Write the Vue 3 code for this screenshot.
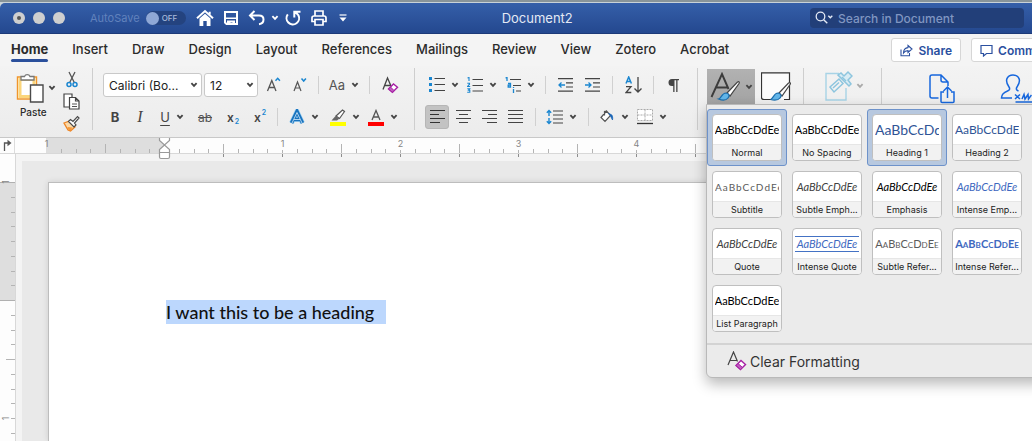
<script setup>
import { h } from 'vue'

const Chevron = () =>
  h('svg', { class: 'chev', width: 8, height: 6, viewBox: '0 0 8 6', 'aria-hidden': 'true' }, [
    h('path', { d: 'M1.4 1.2 4 3.9 6.6 1.2', fill: 'none', stroke: 'currentColor', 'stroke-width': 1.8 }),
  ])

const tabs = ['Home', 'Insert', 'Draw', 'Design', 'Layout', 'References', 'Mailings', 'Review', 'View', 'Zotero', 'Acrobat']

const styles = [
  { name: 'Normal', look: 'plain', selected: true },
  { name: 'No Spacing', look: 'plain' },
  { name: 'Heading 1', look: 'h1', selected: true },
  { name: 'Heading 2', look: 'h2' },
  { name: 'Subtitle', look: 'subtitle' },
  { name: 'Subtle Emph...', look: 'italic soft' },
  { name: 'Emphasis', look: 'italic' },
  { name: 'Intense Emp...', look: 'italic blue' },
  { name: 'Quote', look: 'italic soft' },
  { name: 'Intense Quote', look: 'italic blue ruled' },
  { name: 'Subtle Refer...', look: 'caps grey' },
  { name: 'Intense Refer...', look: 'caps blue bold' },
  { name: 'List Paragraph', look: 'plain' },
]

const inch = 118
const originX = 164
const originY = 300
const eighths = (from, to) => Array.from({ length: to - from + 1 }, (_, i) => from + i)
const mark = (origin, n) => Math.round(origin + (n * inch) / 8) + 0.5
const hTicks = eighths(-8, 96)
const vTicks = eighths(-7, 64)
const isInch = (n) => n % 8 === 0
const isHalf = (n) => n % 4 === 0 && !isInch(n)
</script>

<template>
  <div class="window">
    <header class="titlebar">
      <div class="lights"><i class="edited"></i><i></i><i></i></div>
      <label class="autosave">AutoSave
        <input type="checkbox" disabled>
        <span class="switch"><b></b>OFF</span>
      </label>
      <nav class="quick">
        <button aria-label="Home">
          <svg width="18" height="18" viewBox="0 0 18 18"><path d="M1 9.200 9 2l8 7.200M13.700 5.500V2.800" fill="none" stroke="#fff" stroke-width="2"/><path d="M3.500 9.600 9 4.800l5.500 4.800V17h-3.800v-5H7.300v5H3.500z" fill="#fff"/></svg>
        </button>
        <button aria-label="Save">
          <svg width="16" height="16" viewBox="0 0 16 16"><path d="M2 2h12v12H3.500L2 12.500z" fill="none" stroke="#fff" stroke-width="2"/><path d="M2 7.500h12v1.500H2zM4 10.500h8V15H9.500v-2.500h-2V15H4z" fill="#fff"/></svg>
        </button>
        <button aria-label="Undo">
          <svg width="18" height="16" viewBox="0 0 18 16"><path d="M6.500 1 2 5.500 6.500 10M2.500 5.500h8.500c3 0 4.500 1.600 4.500 4 0 2.500-1.600 4.300-4.500 4.700" fill="none" stroke="#fff" stroke-width="2"/></svg>
        </button>
        <button class="narrow" aria-label="Undo history"><Chevron /></button>
        <button aria-label="Repeat">
          <svg width="16" height="16" viewBox="0 0 16 16"><path d="M2.800 4.300A6.300 6.300 0 1 0 13.400 5.200Q12 3.200 9.500 2.300M15.500 1.700H9.300V7.500" fill="none" stroke="#fff" stroke-width="2"/></svg>
        </button>
        <button aria-label="Print">
          <svg width="18" height="18" viewBox="0 0 18 18"><path d="M5 7V2h8v5M5 12.500H2V9q0-2 2-2h10q2 0 2 2v3.500h-3M5 10.500h8V16H5z" fill="none" stroke="#fff" stroke-width="1.700"/></svg>
        </button>
        <button class="narrow" aria-label="Customize toolbar">
          <svg width="8" height="8" viewBox="0 0 8 8"><path d="M.5 1h7" stroke="#fff" stroke-width="1.200"/><path d="M.5 3.500h7L4 7.500z" fill="#fff"/></svg>
        </button>
      </nav>
      <h1>Document2</h1>
      <label class="search">
        <svg width="19" height="14" viewBox="0 0 19 14"><circle cx="5.500" cy="5.500" r="4.300" fill="none" stroke="#e4eaf5" stroke-width="1.300"/><path d="m8.700 8.700 3.600 3.600M13.300 4.800l2 2 2-2" fill="none" stroke="#e4eaf5" stroke-width="1.400"/></svg>
        <input type="text" placeholder="Search in Document" aria-label="Search in Document">
      </label>
    </header>

    <nav class="tabs">
      <button v-for="(t, i) in tabs" :key="t" class="tab" :class="{ active: i === 0 }">{{ t }}</button>
      <div class="actions">
        <button class="pill">
          <svg width="13" height="13" viewBox="0 0 13 13"><path d="M1 5.500v6.300h8.500V9M8 1.500l4 3.500-4 3.500V6.600C5.800 6.600 4.500 7.400 3.500 9 3.600 5.800 5.500 3.800 8 3.600z" fill="none" stroke="#2b50a0" stroke-width="1.100"/></svg>
          Share
        </button>
        <button class="pill">
          <svg width="13" height="13" viewBox="0 0 13 13"><path d="M1 1.500h11v8H6.500L3.500 12V9.500H1z" fill="none" stroke="#2b50a0" stroke-width="1.200"/></svg>
          Comments
        </button>
      </div>
    </nav>

    <section class="ribbon">
      <div class="group clipboard">
        <button class="paste">
          <span class="paste-row">
            <svg width="28" height="31" viewBox="0 0 28 31"><path d="M1.500 5h19v22h-19z" fill="#fff" stroke="#f0952b" stroke-width="1.400"/><path d="M4 7.500h14v17H4z" fill="#fff" stroke="#fbd67c" stroke-width="3"/><path d="M5 8V4.500h3.500a3 3 0 0 1 5.500 0h4V8z" fill="#fff" stroke="#777" stroke-width="1.300"/><path d="M14.500 13h12.500v17H14.500z" fill="#fff" stroke="#4a4a4a" stroke-width="1.400"/></svg>
            <Chevron />
          </span>
          Paste
        </button>
        <div class="stack">
          <button aria-label="Cut">
            <svg width="12" height="17" viewBox="0 0 12 17"><path d="m3 1 5.300 10.500M9 1 3.700 11.500" stroke="#555" stroke-width="1.300" fill="none"/><circle cx="3" cy="13.500" r="2" fill="none" stroke="#1a86d0" stroke-width="1.500"/><circle cx="9" cy="13.500" r="2" fill="none" stroke="#1a86d0" stroke-width="1.500"/></svg>
          </button>
          <button aria-label="Copy">
            <svg width="17" height="17" viewBox="0 0 17 17"><path d="M6 14H1V1h8v3" fill="#fff" stroke="#444" stroke-width="1.200"/><path d="M6.500 4.500h6L16 8v8H6.500zM12.500 4.500V8H16" fill="#fff" stroke="#444" stroke-width="1.200"/><path d="M9 11h5M9 13.500h5" stroke="#555"/></svg>
          </button>
          <button aria-label="Format painter">
            <svg width="17" height="17" viewBox="0 0 17 17"><path d="m1 8 5.500-2L12 12l-4.500 4-2.500-1z" fill="#fbd9a8" stroke="#ee8322" stroke-width="1.300"/><path d="m4.500 12 5 .5-2 3-2.500-1z" fill="#f59a3a"/><path d="m5.500 6.500 2-2L10 6.500l4.500-5 1.500 1.500-4.500 5 1.500 2-2 2z" fill="#fff" stroke="#4a4a4a" stroke-width="1.200"/></svg>
          </button>
        </div>
      </div>

      <div class="group font">
        <div class="row font-top">
          <span class="field"><select aria-label="Font"><option>Calibri (Bo...</option></select><Chevron /></span>
          <span class="field"><select aria-label="Font size"><option>12</option></select><Chevron /></span>
          <button class="glyph" aria-label="Increase font size">
            <svg width="16" height="16" viewBox="0 0 16 16"><path d="M1.500 14 5.800 3.500 10 14M3 10.500h5.600" fill="none" stroke="#555" stroke-width="1.300"/><path d="m9.500 3.800 2.200-2.500 2.200 2.500" fill="none" stroke="#1a86d0" stroke-width="1.500"/></svg>
          </button>
          <button class="glyph" aria-label="Decrease font size">
            <svg width="16" height="16" viewBox="0 0 16 16"><path d="M2 14 5.500 5 9 14M3.200 11h4.600" fill="none" stroke="#555" stroke-width="1.200"/><path d="m9.500 1.500 2.200 2.500 2.200-2.500" fill="none" stroke="#1a86d0" stroke-width="1.500"/></svg>
          </button>
          <i class="sep"></i>
          <button class="case">Aa<Chevron /></button>
          <i class="sep"></i>
          <button aria-label="Clear formatting">
            <svg width="18" height="18" viewBox="0 0 18 18"><path d="M2 13.500 6.500 2 10 10M3.600 9.500h6" fill="none" stroke="#444" stroke-width="1.300"/><path d="m7.500 13 5-5 4 3.300-5 5z" fill="#fff" stroke="#a71fa5" stroke-width="1.400"/><path d="m7.500 13 2-2 3.500 3.500-1.700 1.800z" fill="#c05dbf" stroke="#a71fa5"/></svg>
          </button>
        </div>
        <div class="row font-bottom">
          <button class="b">B</button>
          <button class="i">I</button>
          <button class="u"><span>U</span><Chevron /></button>
          <button class="s">ab</button>
          <button class="x">x<sub>2</sub></button>
          <button class="x">x<sup>2</sup></button>
          <i class="sep"></i>
          <button aria-label="Text effects">
            <svg width="16" height="16" viewBox="0 0 16 16" fill="none"><path d="M2.500 14 8 2.500 13.500 14M4.500 10.500h7" stroke="#a5d3f2" stroke-width="5"/><path d="M2.500 14 8 2.500 13.500 14M4.500 10.500h7" stroke="#1973be" stroke-width="3.600"/><path d="M3 14 8 3.500 13 14M5 10.500h6" stroke="#d5ebfa" stroke-width=".8"/></svg>
            <Chevron />
          </button>
          <button aria-label="Highlight">
            <svg width="16" height="17" viewBox="0 0 16 17"><path d="M6 7 12.500 1l2 1.500-5 7z" fill="#fff" stroke="#555" stroke-width="1.200"/><path d="m1.500 11.500 4-4.500 4 2.500-2.500 2z" fill="#666"/><path d="M0 13h16v4H0z" fill="#ff0"/></svg>
            <Chevron />
          </button>
          <button aria-label="Font color">
            <svg width="16" height="17" viewBox="0 0 16 17"><path d="M4 11 8 1.500 12 11M5.300 8h5.400" fill="none" stroke="#555" stroke-width="1.300"/><path d="M0 13h16v4H0z" fill="red"/></svg>
            <Chevron />
          </button>
        </div>
      </div>

      <div class="group para">
        <div class="row para-top">
          <button aria-label="Bullets">
            <svg width="16" height="16" viewBox="0 0 16 16"><path d="M0 0h3v3H0zM0 6h3v3H0zM0 12h3v3H0z" fill="#1a86d0"/><path d="M5.500 1.500H16M5.500 7.500H16M5.500 13.500H16" stroke="#444" stroke-width="1.200"/></svg>
            <Chevron />
          </button>
          <button aria-label="Numbering">
            <svg width="16" height="16" viewBox="0 0 16 16"><path d="M.5 1 2 .5V4M.3 6.200h2.200v1L.5 9.500h2.700M.3 11.700h2.400l-1.200 1.600h1.300v1.900H.2" fill="none" stroke="#1a86d0" stroke-width="1.100"/><path d="M5.500 2.500H16M5.500 8.500H16M5.500 14H16" stroke="#444" stroke-width="1.200"/></svg>
            <Chevron />
          </button>
          <button aria-label="Multilevel list">
            <svg width="16" height="17" viewBox="0 0 16 17"><path d="M.5 1 2 .5V4M3 6.500h2.500V10H3.200V8.200h2.300M8.500 12v4M8.500 10v1" fill="none" stroke="#1a86d0" stroke-width="1.300"/><path d="M5 2.500h11M8 8.500h8M11 14h5" stroke="#444" stroke-width="1.200"/></svg>
            <Chevron />
          </button>
          <i class="sep"></i>
          <button class="glyph" aria-label="Decrease indent">
            <svg width="15" height="14" viewBox="0 0 15 14"><path d="M0 .6h15M8 4.800h7M8 9h7M0 13.200h15" stroke="#444" stroke-width="1.200"/><path d="M7 7H1m2.500-2.500L1 7l2.500 2.500" stroke="#1a86d0" stroke-width="1.300" fill="none"/></svg>
          </button>
          <button class="glyph" aria-label="Increase indent">
            <svg width="15" height="14" viewBox="0 0 15 14"><path d="M0 .6h15M8 4.800h7M8 9h7M0 13.200h15" stroke="#444" stroke-width="1.200"/><path d="M0 7h6M3.500 4.500 6 7 3.500 9.500" stroke="#1a86d0" stroke-width="1.300" fill="none"/></svg>
          </button>
          <i class="sep"></i>
          <button class="glyph" aria-label="Sort">
            <svg width="17" height="18" viewBox="0 0 17 18"><path d="M1 7.500 3.700 1l2.700 6.500M2 5.500h3.500" fill="none" stroke="#1a86d0" stroke-width="1.500"/><path d="M1 10.700h5L1 16.500h5.300M13 1v15m-3.500-3.500L13 16l3.500-3.500" fill="none" stroke="#444" stroke-width="1.300"/></svg>
          </button>
          <i class="sep"></i>
          <button class="glyph" aria-label="Show formatting marks">
            <svg width="11" height="13" viewBox="0 0 11 13"><path d="M4 0H11v1.300H9.500V13H8.200V1.300H6.500V13H5.200V7H4A3.500 3.500 0 0 1 4 0z" fill="#444"/></svg>
          </button>
        </div>
        <div class="row para-bottom">
          <button class="align on" aria-label="Align left"><svg width="15" height="14" viewBox="0 0 15 14"><path d="M0 .5h15M0 4.500h9M0 8.500h15M0 12.500h10" stroke="#333" stroke-width="1.200"/></svg></button>
          <button class="align" aria-label="Center"><svg width="15" height="14" viewBox="0 0 15 14"><path d="M0 .5h15M3 4.500h9M0 8.500h15M3 12.500h9" stroke="#444" stroke-width="1.200"/></svg></button>
          <button class="align" aria-label="Align right"><svg width="15" height="14" viewBox="0 0 15 14"><path d="M0 .5h15M6 4.500h9M0 8.500h15M5 12.500h10" stroke="#444" stroke-width="1.200"/></svg></button>
          <button class="align" aria-label="Justify"><svg width="15" height="14" viewBox="0 0 15 14"><path d="M0 .5h15M0 4.500h15M0 8.500h15M0 12.500h15" stroke="#444" stroke-width="1.200"/></svg></button>
          <i class="sep"></i>
          <button aria-label="Line spacing">
            <svg width="17" height="16" viewBox="0 0 17 16"><path d="M7 2h10M7 6h10M7 10h10M7 14h10" stroke="#444" stroke-width="1.200"/><path d="M3 1.500V7M3 9v5.500M.8 3.700 3 1.500l2.200 2.200M.8 12.300 3 14.500l2.200-2.200" fill="none" stroke="#1a86d0" stroke-width="1.400"/></svg>
            <Chevron />
          </button>
          <i class="sep"></i>
          <button aria-label="Shading">
            <svg width="16" height="16" viewBox="0 0 16 16"><path d="M2 8.500 7.500 2l4 4.500L6 12.500zM7.500 2l-2 .5v4" fill="#fff" stroke="#555" stroke-width="1.200"/><path d="m9.500 4.500 3 1.200c1 .8 1.500 3 1 5.300L11 6z" fill="#1a66b8" stroke="#1a66b8" stroke-width=".8"/></svg>
            <Chevron />
          </button>
          <button aria-label="Borders">
            <svg width="16" height="16" viewBox="0 0 16 16"><path d="M.5 .5h15v11H.5zM8 .5v11M.5 6h15" fill="#fff" stroke="#aaa" stroke-dasharray="2 1"/><path d="M0 14.500h16" stroke="#333" stroke-width="1.300"/></svg>
            <Chevron />
          </button>
        </div>
      </div>

      <div class="group gallery">
        <button class="styles-btn" aria-label="Styles" aria-expanded="true">
          <svg width="32" height="30" viewBox="0 0 32 30"><path d="M1.500 25 12 2l6.500 15M6 15.500h11.500" fill="none" stroke="#3c3c3c" stroke-width="1.900"/><path d="m17 21 10.500-11q2.500-1 1.500 1.500L20 24z" fill="#fff" stroke="#444" stroke-width="1.200"/><path d="M8.500 27c3-.5 3-6 7.500-6 3 .5 4 3 2 5-2 2.500-6 2.500-9.500 1z" fill="#62b5e8" stroke="#1c6fae" stroke-width="1.200"/></svg>
          <Chevron />
        </button>
        <button class="pane-btn" aria-label="Styles pane">
          <svg width="30" height="30" viewBox="0 0 30 30"><path d="M10 27.500H3q-2.500 0-2.500-2V.8h28v26.700H23" fill="#fbfbfb" stroke="#333" stroke-width="1.200"/><path d="m18 21 9.500-10q3-1 1.500 1.500L21 24z" fill="#fff" stroke="#444" stroke-width="1.200"/><path d="M9.500 27.500c3-.5 3-6.500 7.500-6.500 3 .5 4 3 2 5-2 2.500-6 2.500-9.500 1.500z" fill="#62b5e8" stroke="#1c6fae" stroke-width="1.200"/></svg>
        </button>

        <div class="menu">
          <div class="cards">
            <button v-for="s in styles" :key="s.name" class="card" :class="{ selected: s.selected }">
              <span class="face">
                <span class="sample" :class="s.look"><span>AaBbCcDdEe</span></span>
                <span class="name">{{ s.name }}</span>
              </span>
            </button>
          </div>
          <button class="clear">
            <svg width="20" height="20" viewBox="0 0 20 20"><path d="M1 14 6.500 1l4 9.500M3 9.500h7" fill="none" stroke="#444" stroke-width="1.200"/><path d="m9 14.500 5-5 4.500 4-5 5z" fill="#fff" stroke="#a71fa5" stroke-width="1.400"/><path d="m9 14.500 2-2 4.500 4-2 2z" fill="#c05dbf" stroke="#a71fa5"/></svg>
            Clear Formatting
          </button>
        </div>
      </div>

      <div class="group dictate">
        <button aria-label="Sensitivity" disabled>
          <svg width="28" height="32" viewBox="0 0 28 32"><path d="M14 3.500H1V30h20V18" fill="none" stroke="#a7d3e6" stroke-width="1.400"/><path d="m5 17 9-8 4 4.500-9 8.500zM8 18l6-5.500" fill="#f2f2f2" stroke="#8dc5de" stroke-width="1.500"/><path d="m13 5 3-2 3 3 4-4 4 4-4 4 3 4-2 2z" fill="#d9ecf4" stroke="#8dc5de" stroke-width="1.500"/><path d="m17 7 4 4" stroke="#8dc5de" stroke-width="1.500"/></svg>
          <Chevron />
        </button>
      </div>

      <div class="group adobe">
        <button aria-label="Create PDF">
          <svg width="27" height="30" viewBox="0 0 27 30"><path d="M9.500 24H3q-2 0-2-2V3q0-2 2-2h9l7 7v4M12 1v5q0 2 2 2h5M15 18h-3v9.500q0 1 1 1h11q1 0 1-1V18h-3M18.500 24V13m-4 4 4-4 4 4" fill="none" stroke="#1767dd" stroke-width="1.500"/></svg>
        </button>
        <button aria-label="Request signatures">
          <svg width="34" height="30" viewBox="0 0 34 30"><path d="M12 24H1.500c0-4 2-5.500 6-7 2.500-1 2.500-2.500 1.500-4-5-7-1.500-12 4-12s9 5 4 12c-1 1.500-1 3 1.500 4M15 20.500l5 4.500m0-4.500-5 4.500M22 25l2-4.500 1 4.500 3-4.500.500 4.500 3-4M15.500 28H32" fill="none" stroke="#1767dd" stroke-width="1.500"/></svg>
        </button>
      </div>
    </section>

    <div class="hruler">
      <button class="tabstop" aria-label="Tab stop">
        <svg width="9" height="13" viewBox="0 0 9 13"><path d="M1.500 12V4H5" fill="none" stroke="#555" stroke-width="1.300"/><path d="M4.500.8 8.500 4l-4 3.200z" fill="#555"/></svg>
      </button>
      <svg class="scale" width="100%" height="24">
        <rect x="46" y="0" width="118" height="15" fill="#dedede"/>
        <g v-for="n in hTicks" :key="n">
          <path v-if="!isInch(n)" :d="`M${mark(originX, n)} ${isHalf(n) ? 6 : 11}V15`" stroke="#b4b4b4"/>
          <path v-if="n > 0 && n % 4 === 0" :d="`M${mark(originX, n)} 16V19`" stroke="#8c8c8c"/>
          <path v-if="n > 0 && isInch(n)" :d="`M${mark(originX, n)} 12V15`" stroke="#b4b4b4"/>
          <text v-if="n && isInch(n)" :x="mark(originX, n)" y="9" text-anchor="middle">{{ Math.abs(n / 8) }}</text>
        </g>
        <path d="M159.500 0v2.500l5 4.500 5-4.500V0M164.500 7l-5 4.500V19q0 1.500 1.500 1.500h7q1.500 0 1.500-1.500v-7.500zM159.500 14.500h10" fill="#fff" stroke="#999" stroke-width="1.200"/>
      </svg>
    </div>

    <main class="workspace">
      <div class="vruler">
        <svg width="15" height="100%">
          <rect x="0" y="28" width="15" height="118" fill="#dedede"/>
          <path d="M0 28.500h15M0 146.500h15" stroke="#b0b0b0"/>
          <g v-for="n in vTicks" :key="n">
            <path v-if="n" :d="`M${isHalf(n) && n > 0 ? 6 : 11} ${mark(originY - 154, n)}H15`" stroke="#b4b4b4"/>
            <text v-if="n > 0 && isInch(n)" :transform="`translate(9 ${mark(originY - 154, n)}) rotate(-90)`" text-anchor="middle">{{ n / 8 }}</text>
          </g>
          <text transform="translate(9 28) rotate(-90)" text-anchor="middle">1</text>
        </svg>
      </div>
      <div class="desk">
        <article class="page"><p><mark>I want this to be a heading</mark></p></article>
      </div>
    </main>
  </div>
</template>

<style>
body { margin: 0; overflow: hidden; }
</style>

<style scoped>
.window {
  box-sizing: border-box; min-height: 100vh; display: flex; flex-direction: column; overflow: hidden;
  border-top: 2px solid #88949a; background: #c9d2d8; color: #2b2b2b;
  font-family: Inter, "Liberation Sans", sans-serif;
}
button { font: inherit; color: inherit; background: none; border: 0; padding: 0; margin: 0; display: flex; align-items: center; justify-content: center; white-space: nowrap; }
svg { display: block; flex: none; }
.chev { color: #444; }

.titlebar {
  height: 31px; display: flex; align-items: center; margin-top: 1px; padding: 0 8px 0 13px;
  background: linear-gradient(#355fa9, #24488f); border-bottom: 1px solid #1d3a78; border-radius: 5px 0 0 0; box-sizing: border-box; color: #fff;
}
.lights { display: flex; gap: 8px; }
.lights i { width: 12px; height: 12px; border-radius: 50%; background: #cfcfcf; display: flex; align-items: center; justify-content: center; }
.lights .edited::after { content: ""; width: 4px; height: 4px; border-radius: 50%; background: #555; }
.autosave { display: flex; align-items: center; gap: 6px; margin-left: 25px; font-size: 11px; color: #6182bd; position: relative; }
.autosave input { position: absolute; opacity: 0; }
.switch { display: flex; align-items: center; gap: 3px; width: 40px; height: 14px; border-radius: 7px; background: #24437f; color: #a9bbdc; font-size: 8px; font-weight: 500; }
.switch b { width: 13px; height: 13px; border-radius: 50%; background: #8fa8d6; }
.quick { display: flex; align-items: center; margin-left: 6px; }
.quick button { width: 26px; height: 24px; }
.quick .narrow { width: 10px; }
.quick .chev { color: #fff; }
.quick .narrow:last-child { margin-left: 6px; }
h1 { margin: 0 0 0 154px; font-size: 13px; font-weight: 400; color: #e3e9f4; }
.search { margin-left: auto; width: 214px; height: 20px; box-sizing: border-box; padding: 0 5px; display: flex; align-items: center; gap: 4px; border-radius: 4px; background: #223f79; }
.search input { flex: 1; min-width: 0; border: 0; padding: 0; background: none; outline: none; color: #fff; font: 500 12px Inter, sans-serif; }
.search input::placeholder { color: #8096c1; opacity: 1; }

.tabs { height: 32px; display: flex; min-width: 1080px; box-sizing: border-box; padding: 0 10px 0 11px; gap: 24px; background: #f4f4f4; }
.tab { position: relative; font-size: 13px; font-weight: 500; height: 30px; }
.tab.active { font-weight: 700; }
.tab.active::after { content: ""; position: absolute; left: 0; right: 0; bottom: 2px; height: 3px; border-radius: 2px; background: #2b509c; }
.actions { margin-left: auto; display: flex; gap: 10px; align-items: center; }
.pill { height: 24px; box-sizing: border-box; padding: 0 8px; gap: 5px; background: #fff; border: 1px solid #d6d6d6; border-radius: 3px; color: #2b50a0; font-size: 12px; font-weight: 600; }

.ribbon { height: 72px; box-sizing: border-box; display: flex; background: linear-gradient(#f3f3f3, #ececec); border-bottom: 1px solid #c8c8c8; }
.group { position: relative; flex: none; box-sizing: border-box; height: 62px; margin-top: 2px; border-right: 1px solid #cecece; }
.row { display: grid; height: 24px; align-items: center; }
.row > button { gap: 6px; height: 24px; }
.row + .row { margin-top: 8px; }
.sep { width: 1px; height: 18px; background: #d0d0d0; justify-self: center; }

.clipboard { display: flex; padding-left: 16px; width: 93px; }
.paste { flex-direction: column; justify-content: flex-start; font-size: 10px; font-weight: 500; align-items: flex-start; padding-top: 4px; gap: 3px; text-indent: 4px; }
.paste-row { display: flex; gap: 4px; align-items: center; }
.stack { margin-left: 7px; display: flex; flex-direction: column; gap: 5px; align-items: center; padding-top: 3px; }

.font { padding: 5px 0 0 10px; width: 322px; margin-top: 2px; }
.font-top { grid-template-columns: 101px 56px 27px 25px 13px 38px 13px 28px; }
.font-bottom { grid-template-columns: 24px 26px 38px 28px 28px 26px 9px 44px 38px 38px; }
.field { position: relative; display: flex; margin-right: 2px; }
.field select { appearance: none; width: 100%; height: 24px; box-sizing: border-box; border: 1px solid #c9c9c9; border-radius: 3px; background: #fff; padding: 0 0 0 5px; font: 12px Inter, sans-serif; color: #222; }
.field .chev { position: absolute; right: 4px; top: 9px; }
.case { font-size: 13px; color: #555; }
.b { font-size: 13px; font-weight: 700; color: #444; }
.i { font: italic 16px "Liberation Serif", serif; color: #444; }
.u { font-size: 13px; color: #444; }
.u span { text-decoration: underline; text-underline-offset: 3px; }
.s { font-size: 12px; color: #555; text-decoration: line-through; }
.x { font-size: 12px; font-weight: 600; color: #444; }
.row > .x { gap: 1px; }
.x sub, .x sup { font-size: 7px; line-height: 8px; color: #1a86d0; }
.x sub { align-self: flex-end; margin-bottom: 3px; }
.x sup { align-self: flex-start; margin-top: 4px; }

.para { padding: 5px 0 0 10px; width: 283px; margin-top: 2px; }
.para-top { grid-template-columns: 38px 38px 38px 12px 28px 26px 14px 28px 12px 28px; }
.para-bottom { grid-template-columns: 26px 26px 26px 26px 12px 40px 14px 38px 38px; }
.align { width: 24px; }
.align.on { background: #c3c3c3; border: 1px solid #b6b6b6; border-radius: 3px; box-sizing: border-box; }

.gallery { display: flex; align-items: flex-start; padding: 1px 0 0 9px; width: 106px; }
.styles-btn { width: 48px; height: 35px; background: linear-gradient(#b2b2b2, #a3a3a3); gap: 3px; }
.pane-btn { margin: 3px 0 0 6px; }
.menu { position: absolute; z-index: 2; top: 36px; left: 8px; width: 340px; box-sizing: border-box; border: 1px solid #b9b9b9; border-radius: 0 0 6px 6px; background: #ebebeb; box-shadow: 0 6px 14px rgba(0, 0, 0, .28); }
.cards { display: grid; grid-template-columns: repeat(4, 80px); grid-auto-rows: 57px; padding: 4px 0 6px; border-bottom: 2px solid #d3d3d3; }
.card { box-sizing: border-box; border: 1px solid transparent; border-radius: 3px; }
.card.selected { background: #b7c8df; border-color: #6d92ca; }
.face { width: 70px; height: 47px; box-sizing: border-box; display: flex; flex-direction: column; border: 1px solid #bfbfbf; border-radius: 4px; overflow: hidden; background: #fff; }
.sample { flex: 1; display: flex; align-items: center; margin: 0 2px; overflow: hidden; font: 11px/14px Lato, sans-serif; color: #000; }
.sample:not(.h1):not(.h2):not(.subtitle) { justify-content: center; }
.name { height: 15px; font-size: 9px; line-height: 15px; background: #f2f2f2; border-top: 1px solid #e6e6e6; color: #1c1c1c; }
.sample.h1 { font-size: 14px; color: #2f5496; }
.sample.h2 { font-size: 12px; color: #2f5496; }
.sample.subtitle { font-size: 10px; color: #5a5a5a; letter-spacing: 1px; }
.italic { font-style: italic; }
.soft { color: #404040; }
.sample.blue { color: #3e68c0; }
.sample.grey { color: #5a5a5a; }
.sample.bold { font-weight: 700; }
.sample.caps { font-variant: small-caps; }
.ruled span { border: solid #4472c4; border-width: 1px 0; padding: 0 2px; }
.clear { height: 32px; padding-left: 20px; gap: 3px; font-size: 14px; color: #333; }

.dictate { display: flex; align-items: flex-start; width: 78px; padding: 2px 0 0 21px; }
.dictate button { gap: 3px; }
.dictate .chev { color: #aaa; }
.adobe { display: flex; align-items: flex-start; gap: 44px; padding: 6px 0 0 47px; border: 0; }

.hruler { position: relative; height: 16px; box-sizing: border-box; border-bottom: 1px solid #d8d8d8; background: #fdfdfd; display: flex; z-index: 1; }
.tabstop { width: 15px; border-right: 1px solid #dcdcdc; }
.scale { position: absolute; left: 0; top: 0; pointer-events: none; }
text { font: 9px Inter, sans-serif; fill: #858585; }

.workspace { flex: 1; display: flex; background: #f4f4f4; }
.vruler { flex: none; width: 15px; background: #fdfdfd; border-right: 1px solid #d8d8d8; position: relative; }
.vruler svg { position: absolute; }
.desk { flex: 1; display: flex; margin: 7px 0 0 6px; padding: 21px 0 0 26px; background: #e9e9e9; }
.page { flex: 1; background: #fff; border: solid #bdbdbd; border-width: 1px 0 0 1px; box-shadow: 0 0 6px rgba(0, 0, 0, .12); padding: 117px 0 0 117px; }
.page p { margin: 0; font: 500 18px/24px Lato, "Liberation Sans", sans-serif; }
mark { display: inline-block; background: #bcd7fd; color: #111; padding-right: 12px; }
</style>
